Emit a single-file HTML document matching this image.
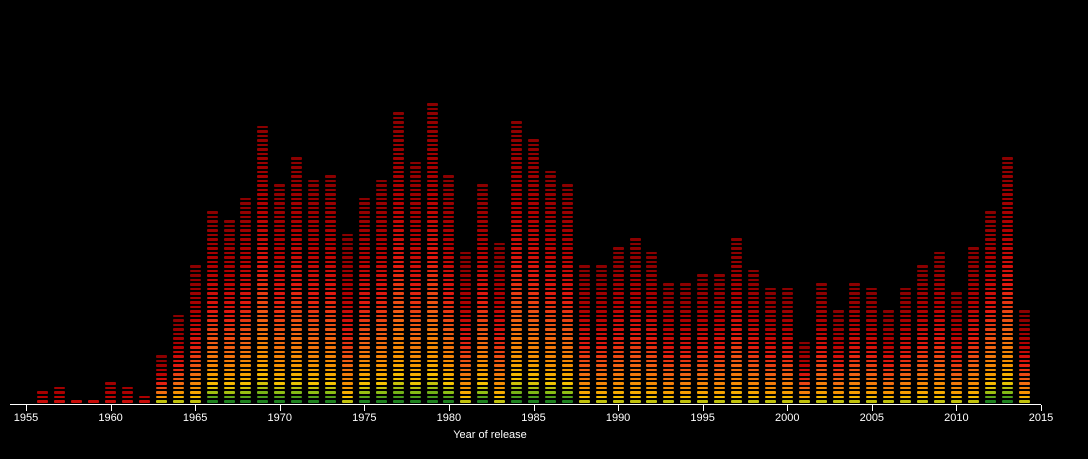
<!DOCTYPE html>
<html><head><style>
html,body{margin:0;background:#000;width:1088px;height:459px;overflow:hidden;font-family:"Liberation Sans",sans-serif;}
#c{position:relative;width:1088px;height:459px;}
.s{position:absolute;width:11px;height:2.6px;border-radius:1px;}
.t{position:absolute;top:405px;width:1px;height:6px;background:#fff;}
.l{position:absolute;top:412px;width:40px;margin-left:-20px;text-align:center;color:#fff;font-size:11px;}
</style></head><body><div id="c">
<div style="position:absolute;left:10px;top:404px;width:1031px;height:1px;background:#fff"></div>
<div style="position:absolute;left:390px;top:429px;width:200px;text-align:center;color:#fff;font-size:11px">Year of release</div>
</div>
<script>
var c=document.getElementById('c');
var tops={1956:391,1957:387,1958:400,1959:400,1960:382,1961:387,1962:396,1963:355,1964:314,1965:265,1966:211,1967:220,1968:197,1969:125,1970:183,1971:156,1972:179,1973:174,1974:233,1975:197,1976:179,1977:111,1978:161,1979:102,1980:174,1981:251,1982:183,1983:242,1984:120,1985:138,1986:170,1987:183,1988:265,1989:265,1990:247,1991:238,1992:251,1993:283,1994:283,1995:274,1996:274,1997:238,1998:269,1999:287,2000:287,2001:341,2002:283,2003:310,2004:283,2005:287,2006:310,2007:287,2008:265,2009:251,2010:292,2011:247,2012:211,2013:156,2014:310};
var stops=[[0,[30,130,30]],[0.04,[140,190,20]],[0.08,[245,195,0]],[0.15,[245,150,0]],[0.3,[240,95,20]],[0.48,[225,25,15]],[0.7,[180,0,0]],[1,[140,0,0]]];
function col(f){for(var i=1;i<stops.length;i++){if(f<=stops[i][0]){var a=stops[i-1],b=stops[i],t=(f-a[0])/(b[0]-a[0]);return 'rgb('+a[1].map(function(v,k){return Math.round(v+(b[1][k]-v)*t)}).join(',')+')';}}return 'rgb(140,0,0)';}
function x(y){return 26+(y-1955)*(1015/60);}
var h='';
for(var y in tops){var n=Math.max(1,Math.round((403-tops[y])/4.5));var cx=x(+y);
var off=n<40?0.06:0;
for(var i=0;i<n;i++){var f=n<6?0.6+i/n*0.3:Math.min(1,off+i/(n-1));h+='<div class="s" style="left:'+(cx-5.5)+'px;top:'+(400.4-i*4.5)+'px;background:'+col(f)+'"></div>';}}
for(var y=1955;y<=2015;y+=5){h+='<div class="t" style="left:'+Math.round(x(y))+'px"></div><div class="l" style="left:'+x(y)+'px">'+y+'</div>';}
c.insertAdjacentHTML('beforeend',h);
</script></body></html>
